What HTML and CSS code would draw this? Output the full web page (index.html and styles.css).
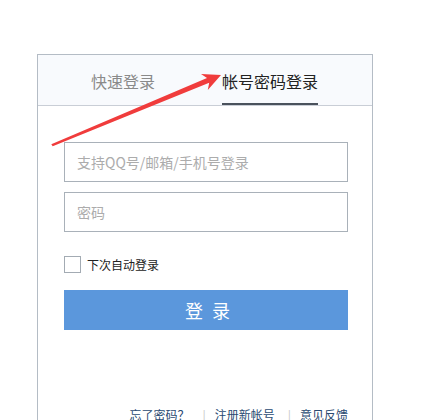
FILE: index.html
```html
<!DOCTYPE html>
<html lang="zh-CN">
<head>
<meta charset="utf-8">
<title>登录</title>
<link rel="stylesheet" href="styles.css">
</head>
<body>
<div class="card">
  <div class="tabs">
    <div class="tab">快速登录</div>
    <div class="tab active">帐号密码登录</div>
  </div>
  <div class="form">
    <input class="field" type="text" placeholder="支持QQ号/邮箱/手机号登录">
    <input class="field" type="password" placeholder="密码">
    <label class="remember"><span class="box"></span><span>下次自动登录</span></label>
    <div class="btn"><span>登</span><span>录</span></div>
    <div class="links">
      <a class="link">忘了密码？</a><span class="sep">|</span><a class="link">注册新帐号</a><span class="sep">|</span><a class="link">意见反馈</a>
    </div>
  </div>
</div>
<svg class="arrow" width="426" height="420" viewBox="0 0 426 420">
  <polygon fill="#f03c3c" points="51.3,144.2 207,78 201,74 221,75 207.8,90 209.2,82.8 52.7,146.3"/>
</svg>
</body>
</html>
```
FILE: styles.css
```css
html, body {
  margin: 0;
  padding: 0;
  background: #ffffff;
}
body {
  font-family: "Noto Sans CJK SC", "Noto Sans", sans-serif;
  position: relative;
  height: 420px;
  overflow: hidden;
}
.card {
  margin: 54px 0 0 37px;
  width: 336px;
  box-sizing: border-box;
  border: 1px solid #b4bcc5;
  background: #ffffff;
}
.tabs {
  display: flex;
  height: 51px;
  box-sizing: border-box;
  background: #f8fafd;
  border-bottom: 1px solid #c9ced6;
  padding-left: 53px;
  gap: 67px;
}
.tab {
  display: flex;
  align-items: center;
  height: 50px;
  box-sizing: border-box;
  padding-top: 3px;
  border-bottom: 2px solid transparent;
  font-size: 16px;
  color: #8a8a8a;
}
.tab.active {
  color: #222222;
  border-bottom-color: #4a525c;
}
.form {
  display: flex;
  flex-direction: column;
  padding: 36px 24px 60px 26px;
}
.field {
  display: block;
  width: 284px;
  height: 40px;
  box-sizing: border-box;
  margin: 0 0 10px 0;
  border: 1px solid #a9b1b9;
  padding: 0 0 0 12px;
  font-family: "Noto Sans CJK SC", sans-serif;
  font-size: 14px;
  outline: none;
  background: #ffffff;
}
.field::placeholder {
  color: #acacac;
}
.remember {
  display: flex;
  align-items: center;
  margin-top: 14px;
  height: 17px;
  font-size: 12px;
  color: #222222;
}
.box {
  width: 17px;
  height: 17px;
  box-sizing: border-box;
  border: 1px solid #a3abb3;
  margin-right: 6px;
}
.btn {
  margin-top: 17px;
  width: 284px;
  height: 40px;
  background: #5b97dc;
  color: #ffffff;
  font-size: 18px;
  display: flex;
  align-items: center;
  justify-content: center;
  gap: 9px;
  padding-left: 3px;
  box-sizing: border-box;
}
.links {
  margin-top: 77px;
  display: flex;
  justify-content: flex-end;
  align-items: center;
  font-size: 12px;
  line-height: 16px;
  width: 284px;
}
.link {
  color: #2a4a72;
}
.sep {
  color: #c8c8c8;
  margin: 0 9px 0 13px;
}
.arrow {
  position: absolute;
  left: 0;
  top: 0;
  pointer-events: none;
}
```
